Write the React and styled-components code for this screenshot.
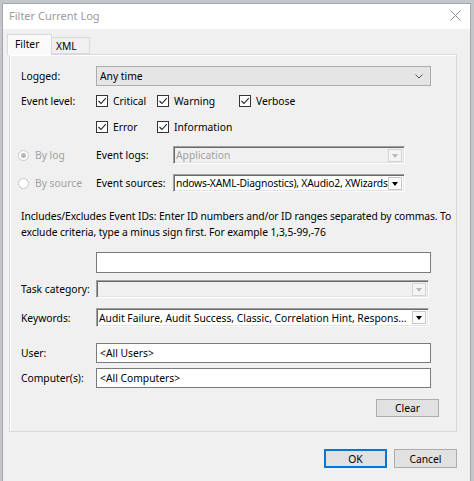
import React from 'react';
import styled, { createGlobalStyle } from 'styled-components';

const GlobalStyle = createGlobalStyle`
  html, body {
    margin: 0;
    padding: 0;
  }
  body {
    background: #c3c6cb;
    font-family: "Noto Sans", "Open Sans", sans-serif;
    font-size: 10.3px;
    color: #000;
    overflow: hidden;
  }
`;

const Window = styled.div`
  margin: 3px 0 0 2px;
  width: 469px;
  height: 478px;
  background: #f0f0f0;
  border: 1px solid #a6a6a6;
  border-bottom: none;
  box-sizing: border-box;
`;

const TitleBar = styled.div`
  height: 25px;
  background: #fff;
  display: flex;
  align-items: center;
  justify-content: space-between;
  padding: 0 6px 2px 6px;
  box-sizing: border-box;
  font-size: 11px;
  color: #9a9a9a;
`;

const CloseIcon = styled.svg`
  width: 11px;
  height: 11px;
  margin-right: 3px;
`;

const TabStrip = styled.div`
  display: flex;
  align-items: flex-end;
  height: 20px;
  margin: 5px 0 0 4px;
  position: relative;
  z-index: 1;
`;

const Tab = styled.div`
  height: ${p => (p.$active ? 21 : 17)}px;
  width: ${p => p.$w}px;
  box-sizing: border-box;
  border: 1px solid #d9d9d9;
  border-bottom: ${p => (p.$active ? 'none' : '1px solid #d9d9d9')};
  border-left: ${p => (p.$active ? '1px solid #d9d9d9' : 'none')};
  background: ${p => (p.$active ? '#fafafa' : '#f0f0f0')};
  padding: ${p => (p.$active ? '2px 0 0 7px' : '0 0 0 4px')};
  display: flex;
  align-items: ${p => (p.$active ? 'flex-start' : 'center')};
  margin-bottom: ${p => (p.$active ? -1 : 0)}px;
`;

const Panel = styled.div`
  margin-left: 6px;
  width: 448px;
  height: 378px;
  box-sizing: border-box;
  border: 1px solid #d9d9d9;
  box-shadow: inset 1px 1px 0 #fff;
  padding: 11px 25px 0 11px;
`;

const Row = styled.div`
  display: grid;
  grid-template-columns: ${p => p.$cols || '75px minmax(0, 1fr)'};
  align-items: center;
  height: ${p => p.$h}px;
  margin-top: ${p => p.$mt || 0}px;
`;

const Label = styled.div`
  white-space: nowrap;
  color: ${p => (p.$disabled ? '#a0a0a0' : '#000')};
`;

const FlatSelect = styled.div`
  height: 20px;
  box-sizing: border-box;
  background: #e5e5e5;
  border: 1px solid #adadad;
  display: flex;
  align-items: center;
  justify-content: space-between;
  padding: 0 7px 0 3px;
`;

const Chevron = styled.svg`
  width: 8px;
  height: 5px;
`;

const Checks = styled.div`
  display: flex;
  align-items: center;
`;

const CheckItem = styled.div`
  display: flex;
  align-items: center;
  gap: 5px;
  width: ${p => p.$w}px;
  white-space: nowrap;
`;

const CheckBox = styled.span`
  width: 12px;
  height: 12px;
  box-sizing: border-box;
  border: 1px solid #333;
  background: #fff;
  display: inline-flex;
  align-items: center;
  justify-content: center;
`;

const RadioItem = styled.div`
  display: flex;
  align-items: center;
  gap: 6px;
  margin-left: -3px;
  color: #a0a0a0;
  white-space: nowrap;
`;

const Radio = styled.span`
  width: 11px;
  height: 11px;
  box-sizing: border-box;
  border-radius: 50%;
  border: 1px solid #c6c6c6;
  background: #fff;
  display: inline-flex;
  align-items: center;
  justify-content: center;

  &::after {
    content: '';
    width: 5px;
    height: 5px;
    border-radius: 50%;
    background: ${p => (p.$checked ? '#b5b5b5' : 'transparent')};
  }
`;

const Combo = styled.div`
  height: ${p => p.$h || 18}px;
  min-width: 0;
  box-sizing: border-box;
  background: ${p => (p.$disabled ? '#f0f0f0' : '#fff')};
  border-top: 1px solid #a0a0a0;
  border-left: 1px solid #a0a0a0;
  border-right: 1px solid #fff;
  border-bottom: 1px solid #fff;
  box-shadow: inset 1px 1px 0 #696969, inset -1px -1px 0 #e3e3e3;
  display: flex;
  align-items: center;
  padding: 0 2px 0 1px;
  color: ${p => (p.$disabled ? '#a0a0a0' : '#000')};
  margin-right: ${p => p.$mr || 0}px;
`;

const ComboText = styled.span`
  flex: 1;
  min-width: 0;
  white-space: nowrap;
  overflow: hidden;
  padding-left: 1px;
  letter-spacing: ${p => p.$ls || 0}px;
`;

const DropButton = styled.span`
  flex: none;
  width: 14px;
  height: 13px;
  box-sizing: border-box;
  border: 1px solid ${p => (p.$disabled ? '#d4d4d4' : '#c8c8c8')};
  background: ${p => (p.$disabled ? '#f4f4f4' : '#fafafa')};
  display: inline-flex;
  align-items: center;
  justify-content: center;
  margin-left: ${p => p.$ml || 0}px;

  &::after {
    content: '';
    border-left: 3.5px solid transparent;
    border-right: 3.5px solid transparent;
    border-top: 4px solid ${p => (p.$disabled ? '#b8b8b8' : '#000')};
    margin-top: 1px;
  }
`;

const Help = styled.div`
  margin-top: 16px;
  line-height: 16px;
  white-space: nowrap;
  letter-spacing: -0.08px;
`;

const TextBox = styled.div`
  height: ${p => p.$h || 20}px;
  box-sizing: border-box;
  background: #fff;
  border: 1px solid #7a7a7a;
  display: flex;
  align-items: center;
  padding-left: 3px;
  white-space: nowrap;
`;

const ButtonRow = styled.div`
  display: flex;
  justify-content: flex-end;
  gap: 7px;
  margin-top: ${p => p.$mt}px;
  margin-right: ${p => p.$mr || 0}px;
`;

const Button = styled.div`
  width: ${p => p.$w}px;
  height: ${p => p.$h}px;
  box-sizing: border-box;
  background: #e1e1e1;
  border: 1px solid ${p => (p.$default ? '#0078d7' : '#adadad')};
  box-shadow: ${p => (p.$default ? 'inset 0 0 0 1px #0078d7' : 'none')};
  display: flex;
  align-items: center;
  justify-content: center;
`;

const Footer = styled(ButtonRow)`
  padding-right: 13px;
`;

const Check = () => (
  <svg width="10" height="10" viewBox="0 0 10 10">
    <polyline points="1.5,5 4,7.5 8.8,2.2" fill="none" stroke="#222" strokeWidth="1.1" />
  </svg>
);

const CheckField = ({ w, children }) => (
  <CheckItem $w={w}>
    <CheckBox>
      <Check />
    </CheckBox>
    {children}
  </CheckItem>
);

const App = () => (
  <>
    <GlobalStyle />
    <Window>
      <TitleBar>
        <span>Filter Current Log</span>
        <CloseIcon viewBox="0 0 11 11">
          <path d="M0.5 0.5 L10.5 10.5 M10.5 0.5 L0.5 10.5" stroke="#8c8c8c" strokeWidth="1" />
        </CloseIcon>
      </TitleBar>

      <TabStrip>
        <Tab $active $w={45}>Filter</Tab>
        <Tab $w={38}>XML</Tab>
      </TabStrip>

      <Panel>
        <Row $h={20}>
          <Label>Logged:</Label>
          <FlatSelect>
            <span>Any time</span>
            <Chevron viewBox="0 0 8 5">
              <polyline points="0.5,0.5 4,4 7.5,0.5" fill="none" stroke="#555" strokeWidth="1" />
            </Chevron>
          </FlatSelect>
        </Row>

        <Row $h={20} $mt={5}>
          <Label>Event level:</Label>
          <Checks>
            <CheckField w={61}>Critical</CheckField>
            <CheckField w={82}>Warning</CheckField>
            <CheckField w={80}>Verbose</CheckField>
          </Checks>
        </Row>

        <Row $h={20} $mt={6}>
          <span />
          <Checks>
            <CheckField w={61}>Error</CheckField>
            <CheckField w={100}>Information</CheckField>
          </Checks>
        </Row>

        <Row $h={18} $mt={9} $cols="75px 77px 232px">
          <RadioItem>
            <Radio $checked />
            By log
          </RadioItem>
          <Label>Event logs:</Label>
          <Combo $disabled>
            <ComboText>Application</ComboText>
            <DropButton $disabled />
          </Combo>
        </Row>

        <Row $h={18} $mt={10} $cols="75px 77px 232px">
          <RadioItem>
            <Radio />
            By source
          </RadioItem>
          <Label>Event sources:</Label>
          <Combo>
            <ComboText $ls={-0.2}>ndows-XAML-Diagnostics), XAudio2, XWizards</ComboText>
            <DropButton />
          </Combo>
        </Row>

        <Help>
          Includes/Excludes Event IDs: Enter ID numbers and/or ID ranges separated by commas. To
          <br />
          exclude criteria, type a minus sign first. For example 1,3,5-99,-76
        </Help>

        <Row $h={21} $mt={12}>
          <span />
          <TextBox $h={21} />
        </Row>

        <Row $h={18} $mt={7}>
          <Label>Task category:</Label>
          <Combo $disabled $mr={2}>
            <ComboText />
            <DropButton $disabled />
          </Combo>
        </Row>

        <Row $h={19} $mt={10}>
          <Label>Keywords:</Label>
          <Combo $h={19} $mr={2}>
            <ComboText>Audit Failure, Audit Success, Classic, Correlation Hint, Respons...</ComboText>
            <DropButton $ml={6} />
          </Combo>
        </Row>

        <Row $h={20} $mt={16}>
          <Label>User:</Label>
          <TextBox>&lt;All Users&gt;</TextBox>
        </Row>

        <Row $h={20} $mt={5}>
          <Label>Computer(s):</Label>
          <TextBox>&lt;All Computers&gt;</TextBox>
        </Row>

        <ButtonRow $mt={11} $mr={-8}>
          <Button $w={63} $h={18}>Clear</Button>
        </ButtonRow>
      </Panel>

      <Footer $mt={17}>
        <Button $w={63} $h={19} $default>OK</Button>
        <Button $w={63} $h={19}>Cancel</Button>
      </Footer>
    </Window>
  </>
);

export default App;
